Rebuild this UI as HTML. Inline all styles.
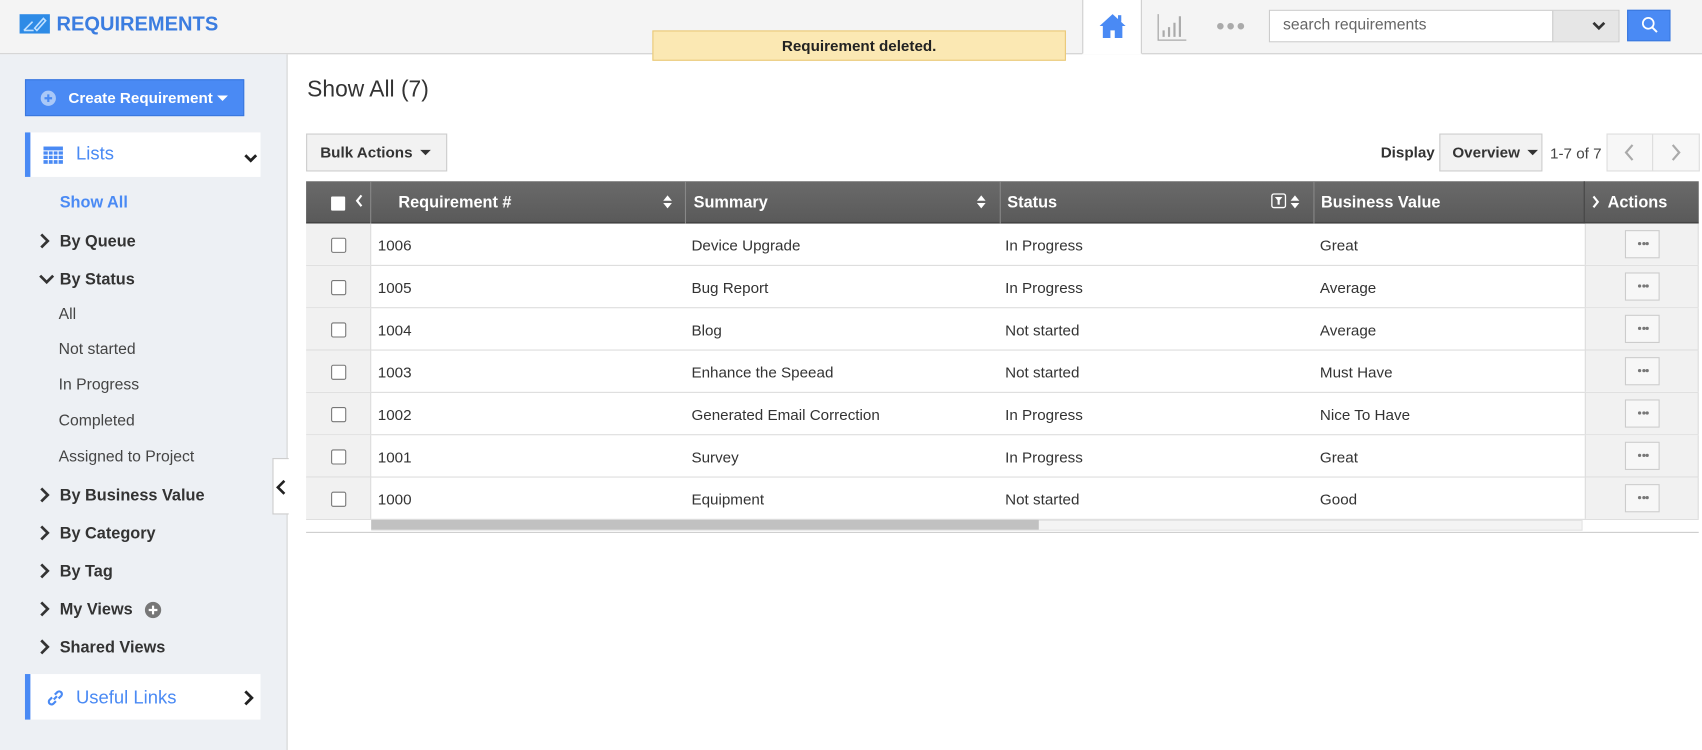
<!DOCTYPE html>
<html><head><meta charset="utf-8"><style>
*{box-sizing:border-box;margin:0;padding:0}
html,body{width:1702px;height:750px;overflow:hidden;background:#fff;font-family:"Liberation Sans",Arial,sans-serif}
#w{position:absolute;left:0;top:0;width:1568px;height:691px;transform:scale(1.08546,1.0854);transform-origin:0 0}
.a{position:absolute}
.hdr{left:0;top:0;width:1568px;height:50px;background:#f4f4f4;border-bottom:1px solid #cfcfcf}
.side{left:0;top:50px;width:265px;height:641px;background:#edf0f4;border-right:1px solid #d6d6d6}
.nav{font-size:15px;font-weight:bold;color:#333;left:55px}
.sub{font-size:14.5px;color:#444;left:54px}
.chev{left:36px;width:10px}
.th{top:167px;height:39px;line-height:39px;color:#fff;font-weight:bold;font-size:15px}
.row{position:absolute;left:282px;width:1283px;height:39px;border-bottom:1px solid #dcdcdc;font-size:14px;color:#333}
.row span{position:absolute;top:12px}
.cb{position:absolute;left:0;top:0;width:60px;height:38px;background:#f1f1f1;border-right:1px solid #dcdcdc}
.cb i{position:absolute;left:23px;top:13px;width:14px;height:14px;border:1px solid #777;border-radius:2px;background:#fff}
.ac{position:absolute;left:1178px;top:0;width:105px;height:38px;background:#f1f1f1;border-left:1px solid #dcdcdc;border-right:1px solid #dcdcdc}
.ac i{position:absolute;left:36px;top:6px;width:32px;height:26px;border:1px solid #ccc;background:#f7f7f7}
.ac i:after{content:"";position:absolute;left:11px;top:10px;width:3px;height:3px;border-radius:50%;background:#777;box-shadow:4px 0 #777,7px 0 #777}
</style></head><body><div id="w">
<div class="a hdr"></div>
<svg class="a" style="left:18px;top:13px" width="28" height="18" viewBox="0 0 28 18"><rect width="28" height="18" fill="#2e8be6"/><path d="M4 15 L12 7 M4 15h9 M14 13 L22 4 l2 2 -8 9z" stroke="#bfe0ff" stroke-width="1.5" fill="none"/></svg>
<div class="a" style="left:52px;top:11px;font-size:18.5px;font-weight:bold;color:#3b7de0">REQUIREMENTS</div>
<div class="a" style="left:601px;top:28px;width:381px;height:28px;background:#fbe8b3;border:1px solid #e9c877;text-align:center;font-weight:bold;font-size:14px;line-height:26px;color:#222">Requirement deleted.</div>
<div class="a" style="left:997px;top:0;width:55px;height:50px;background:#fff;border-left:1px solid #ccc;border-right:1px solid #ccc;border-bottom:1px solid #fff"></div>
<svg class="a" style="left:1012px;top:11px" width="26" height="26" viewBox="0 0 26 26"><path d="M13 2 L1 13 h3 v11 h7 v-7 h4 v7 h7 V13 h3z" fill="#4a8af4"/><rect x="18" y="3" width="3" height="6" fill="#4a8af4"/></svg>
<svg class="a" style="left:1066px;top:12px" width="27" height="26" viewBox="0 0 27 26"><path d="M1 1v24h26" stroke="#aaa" fill="none" stroke-width="1.2"/><path d="M6 22v-6M11 22v-9M16 22v-13M21 22v-19" stroke="#aaa" stroke-width="2"/></svg>
<div class="a" style="left:1120px;top:15px;font-size:14px;color:#aaa;letter-spacing:1px">●●●</div>
<div class="a" style="left:1169px;top:9px;width:323px;height:30px;background:#fff;border:1px solid #ccc"></div>
<div class="a" style="left:1182px;top:15px;font-size:14.5px;color:#666">search requirements</div>
<div class="a" style="left:1430px;top:10px;width:61px;height:28px;background:#e6e6e6;border-left:1px solid #ccc"></div>
<svg class="a" style="left:1467px;top:19px" width="12" height="10"><path d="M1 2l5 5 5-5" stroke="#333" stroke-width="2.5" fill="none"/></svg>
<div class="a" style="left:1499px;top:9px;width:40px;height:29px;background:#4a8af4;border:1px solid #3a78de"></div>
<svg class="a" style="left:1512px;top:15px" width="16" height="16"><circle cx="6.5" cy="6.5" r="5" stroke="#fff" stroke-width="1.6" fill="none"/><path d="M10 10l4.5 4.5" stroke="#fff" stroke-width="1.8"/></svg>

<div class="a side"></div>
<div class="a" style="left:23px;top:73px;width:202px;height:34px;background:#4a8af4;border:1px solid #3a78de"></div>
<svg class="a" style="left:37px;top:83px" width="15" height="15"><circle cx="7.5" cy="7.5" r="7" fill="#a9c8f8"/><path d="M7.5 4v7M4 7.5h7" stroke="#4a8af4" stroke-width="2"/></svg>
<div class="a" style="left:63px;top:82px;font-size:14px;font-weight:bold;color:#fff">Create Requirement</div>
<svg class="a" style="left:200px;top:88px" width="10" height="6"><path d="M0 0h10L5 5z" fill="#fff"/></svg>
<div class="a" style="left:23px;top:122px;width:217px;height:41px;background:#fff;border-left:5px solid #4a8af4"></div>
<svg class="a" style="left:40px;top:135px" width="18" height="16"><rect x="0" y="0" width="18" height="16" fill="#4a8af4"/><path d="M0 4h18M0 8h18M0 12h18M4.5 4v12M9 4v12M13.5 4v12" stroke="#fff" stroke-width="1"/></svg>
<div class="a" style="left:70px;top:132px;font-size:17px;color:#4a8af4">Lists</div>
<svg class="a" style="left:224px;top:141px" width="14" height="10"><path d="M2 2l5 5 5-5" stroke="#222" stroke-width="2.6" fill="none"/></svg>
<div class="a" style="left:55px;top:178px;font-size:15px;font-weight:bold;color:#4a8af4">Show All</div>
<svg class="a chev" style="top:215px" height="14"><path d="M2 1l6 6-6 6" stroke="#333" stroke-width="2.5" fill="none"/></svg>
<div class="a nav" style="top:214px">By Queue</div>
<svg class="a" style="left:35px;top:252px" width="16" height="12"><path d="M2 2l6 6 6-6" stroke="#333" stroke-width="2.5" fill="none"/></svg>
<div class="a nav" style="top:249px">By Status</div>
<div class="a sub" style="top:282px">All</div>
<div class="a sub" style="top:314px">Not started</div>
<div class="a sub" style="top:347px">In Progress</div>
<div class="a sub" style="top:380px">Completed</div>
<div class="a sub" style="top:413px">Assigned to Project</div>
<svg class="a chev" style="top:449px" height="14"><path d="M2 1l6 6-6 6" stroke="#333" stroke-width="2.5" fill="none"/></svg>
<div class="a nav" style="top:448px">By Business Value</div>
<svg class="a chev" style="top:484px" height="14"><path d="M2 1l6 6-6 6" stroke="#333" stroke-width="2.5" fill="none"/></svg>
<div class="a nav" style="top:483px">By Category</div>
<svg class="a chev" style="top:519px" height="14"><path d="M2 1l6 6-6 6" stroke="#333" stroke-width="2.5" fill="none"/></svg>
<div class="a nav" style="top:518px">By Tag</div>
<svg class="a chev" style="top:554px" height="14"><path d="M2 1l6 6-6 6" stroke="#333" stroke-width="2.5" fill="none"/></svg>
<div class="a nav" style="top:553px">My Views</div>
<svg class="a" style="left:133px;top:554px" width="16" height="16"><circle cx="8" cy="8" r="7.5" fill="#777"/><path d="M8 4v8M4 8h8" stroke="#fff" stroke-width="2"/></svg>
<svg class="a chev" style="top:589px" height="14"><path d="M2 1l6 6-6 6" stroke="#333" stroke-width="2.5" fill="none"/></svg>
<div class="a nav" style="top:588px">Shared Views</div>
<div class="a" style="left:23px;top:621px;width:217px;height:42px;background:#fff;border-left:5px solid #4a8af4"></div>
<svg class="a" style="left:42px;top:634px" width="18" height="18" viewBox="0 0 18 18"><path d="M7.5 10.5l3-3M6 8.5l-2.5 2.5a2.5 2.5 0 0 0 3.5 3.5L9.5 12M12 9.5l2.5-2.5a2.5 2.5 0 0 0-3.5-3.5L8.5 6" stroke="#4a8af4" stroke-width="2" fill="none"/></svg>
<div class="a" style="left:70px;top:633px;font-size:17px;color:#4a8af4">Useful Links</div>
<svg class="a" style="left:224px;top:636px" width="10" height="14"><path d="M2 1l6 6-6 6" stroke="#222" stroke-width="2.6" fill="none"/></svg>
<div class="a" style="left:251px;top:422px;width:15px;height:52px;background:#fff;border:1px solid #ccc;border-right:none"></div>
<svg class="a" style="left:254px;top:442px" width="10" height="14"><path d="M8 1l-6 6 6 6" stroke="#222" stroke-width="2.4" fill="none"/></svg>

<div class="a" style="left:283px;top:71px;font-size:21px;color:#333">Show All (7)</div>
<div class="a" style="left:282px;top:123px;width:130px;height:35px;background:#f2f2f2;border:1px solid #ccc"></div>
<div class="a" style="left:295px;top:132px;font-size:14px;font-weight:bold;color:#333">Bulk Actions</div>
<svg class="a" style="left:387px;top:138px" width="10" height="6"><path d="M0 0h10L5 5z" fill="#333"/></svg>
<div class="a" style="left:1272px;top:132px;font-size:14px;font-weight:bold;color:#333">Display</div>
<div class="a" style="left:1326px;top:123px;width:95px;height:35px;background:#f2f2f2;border:1px solid #ccc"></div>
<div class="a" style="left:1338px;top:132px;font-size:14px;font-weight:bold;color:#333">Overview</div>
<svg class="a" style="left:1407px;top:138px" width="10" height="6"><path d="M0 0h10L5 5z" fill="#333"/></svg>
<div class="a" style="left:1428px;top:133px;font-size:14px;color:#444">1-7 of 7</div>
<div class="a" style="left:1480px;top:123px;width:86px;height:35px;background:#f7f7f7;border:1px solid #ddd"></div>
<div class="a" style="left:1522px;top:123px;width:1px;height:35px;background:#ddd"></div>
<svg class="a" style="left:1496px;top:132px" width="10" height="17"><path d="M8 1.5l-6 7 6 7" stroke="#aaa" stroke-width="2" fill="none"/></svg>
<svg class="a" style="left:1539px;top:132px" width="10" height="17"><path d="M2 1.5l6 7-6 7" stroke="#aaa" stroke-width="2" fill="none"/></svg>

<div class="a" style="left:282px;top:167px;width:1283px;height:39px;background:linear-gradient(#6a6a6a,#5a5a5a);border-bottom:2px solid #444"></div>
<div class="a" style="left:341px;top:167px;width:1px;height:39px;background:#888"></div>
<div class="a" style="left:631px;top:167px;width:1px;height:39px;background:#888"></div>
<div class="a" style="left:921px;top:167px;width:1px;height:39px;background:#888"></div>
<div class="a" style="left:1210px;top:167px;width:1px;height:39px;background:#888"></div>
<div class="a" style="left:1459px;top:167px;width:1px;height:39px;background:#444"></div>
<div class="a" style="left:305px;top:181px;width:13px;height:13px;background:#fff;border-radius:1px"></div>
<svg class="a" style="left:327px;top:179px" width="8" height="12"><path d="M6 1l-4 5 4 5" stroke="#fff" stroke-width="2" fill="none"/></svg>
<div class="a th" style="left:367px">Requirement #</div>
<div class="a th" style="left:639px">Summary</div>
<div class="a th" style="left:928px">Status</div>
<div class="a th" style="left:1217px">Business Value</div>
<svg class="a" style="left:1466px;top:180px" width="8" height="12"><path d="M2 1l4 5-4 5" stroke="#fff" stroke-width="2" fill="none"/></svg>
<div class="a th" style="left:1481px">Actions</div>
<svg class="a" style="left:610px;top:179px" width="10" height="14"><path d="M1 6l4-5 4 5zM1 8l4 5 4-5z" fill="#fff"/></svg>
<svg class="a" style="left:899px;top:179px" width="10" height="14"><path d="M1 6l4-5 4 5zM1 8l4 5 4-5z" fill="#fff"/></svg>
<svg class="a" style="left:1188px;top:179px" width="10" height="14"><path d="M1 6l4-5 4 5zM1 8l4 5 4-5z" fill="#fff"/></svg>
<svg class="a" style="left:1171px;top:178px" width="14" height="14"><rect x="0.7" y="0.7" width="12.6" height="12.6" rx="2" stroke="#fff" stroke-width="1.3" fill="none"/><path d="M3.5 3.5h7l-2.5 3v4h-2v-4z" fill="#fff"/></svg>

<div class="row" style="top:206px"><div class="cb"><i></i></div><span style="left:66px">1006</span><span style="left:355px">Device Upgrade</span><span style="left:644px">In Progress</span><span style="left:934px">Great</span><div class="ac"><i></i></div></div>
<div class="row" style="top:245px"><div class="cb"><i></i></div><span style="left:66px">1005</span><span style="left:355px">Bug Report</span><span style="left:644px">In Progress</span><span style="left:934px">Average</span><div class="ac"><i></i></div></div>
<div class="row" style="top:284px"><div class="cb"><i></i></div><span style="left:66px">1004</span><span style="left:355px">Blog</span><span style="left:644px">Not started</span><span style="left:934px">Average</span><div class="ac"><i></i></div></div>
<div class="row" style="top:323px"><div class="cb"><i></i></div><span style="left:66px">1003</span><span style="left:355px">Enhance the Speead</span><span style="left:644px">Not started</span><span style="left:934px">Must Have</span><div class="ac"><i></i></div></div>
<div class="row" style="top:362px"><div class="cb"><i></i></div><span style="left:66px">1002</span><span style="left:355px">Generated Email Correction</span><span style="left:644px">In Progress</span><span style="left:934px">Nice To Have</span><div class="ac"><i></i></div></div>
<div class="row" style="top:401px"><div class="cb"><i></i></div><span style="left:66px">1001</span><span style="left:355px">Survey</span><span style="left:644px">In Progress</span><span style="left:934px">Great</span><div class="ac"><i></i></div></div>
<div class="row" style="top:440px"><div class="cb"><i></i></div><span style="left:66px">1000</span><span style="left:355px">Equipment</span><span style="left:644px">Not started</span><span style="left:934px">Good</span><div class="ac"><i></i></div></div>
<div class="a" style="left:342px;top:479px;width:1116px;height:10px;background:#f4f4f4;border:1px solid #e4e4e4"></div>
<div class="a" style="left:342px;top:479px;width:615px;height:9px;background:#c1c1c1"></div>
<div class="a" style="left:282px;top:490px;width:1283px;height:1px;background:#ccc"></div>
</div></body></html>
